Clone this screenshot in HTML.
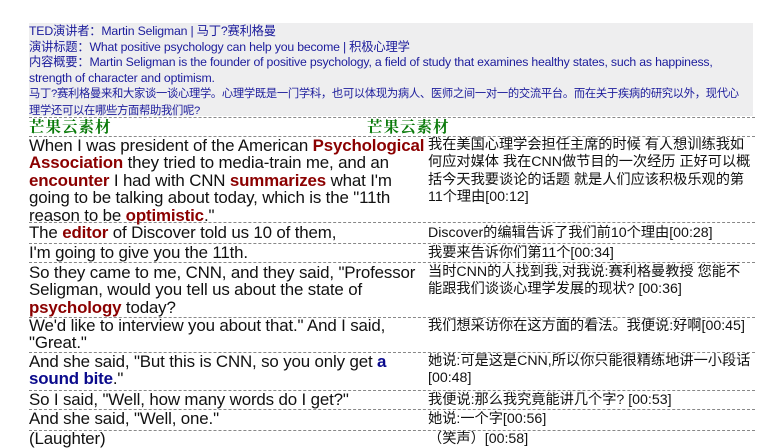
<!DOCTYPE html>
<html><head><meta charset="utf-8"><style>
*{margin:0;padding:0;box-sizing:border-box}
body{width:784px;height:441px;overflow:hidden;background:#fff;font-family:"Liberation Sans","Noto Sans CJK SC",sans-serif;position:relative}
.info{position:absolute;left:29px;top:23px;width:724px;height:93px;background:#eeeeef;color:#1c1c9c;font-size:12.3px;line-height:15.6px;padding:1px 0 0 0;letter-spacing:-0.2px;white-space:nowrap;overflow:hidden}
.info .cj{font-size:11.3px;letter-spacing:-0.3px}
.hdr{position:absolute;top:117px;color:#0a7a0a;font-size:15.5px;font-weight:bold;font-family:"Noto Serif CJK SC","Noto Sans CJK SC",serif;letter-spacing:1px;line-height:19px}
.line{position:absolute;left:29px;width:726px;border-top:1px dashed #888;height:0}
.l{position:absolute;left:29px;width:400px;font-size:16.9px;line-height:17.4px;color:#111;letter-spacing:-0.15px;white-space:nowrap}
.r{position:absolute;left:428px;width:330px;font-size:14.2px;line-height:17.4px;color:#111;white-space:nowrap}
b.k{color:#8b0000}
b.bl{color:#0a0a8c}
</style></head><body>
<div class="info">TED演讲者：Martin Seligman | 马丁?赛利格曼<br>演讲标题：What positive psychology can help you become | 积极心理学<br>内容概要：Martin Seligman is the founder of positive psychology, a field of study that examines healthy states, such as happiness,<br>strength of character and optimism.<br><span class="cj">马丁?赛利格曼来和大家谈一谈心理学。心理学既是一门学科，也可以体现为病人、医师之间一对一的交流平台。而在关于疾病的研究以外，现代心</span><br><span class="cj">理学还可以在哪些方面帮助我们呢?</span></div>
<div class="line" style="top:117px"></div>
<div class="hdr" style="left:29px">芒果云素材</div>
<div class="hdr" style="left:367px">芒果云素材</div>
<div class="line" style="top:136px"></div>

<div class="l" style="top:137px">When I was president of the American <b class="k">Psychological</b><br><b class="k">Association</b> they tried to media-train me, and an<br><b class="k">encounter</b> I had with CNN <b class="k">summarizes</b> what I'm<br>going to be talking about today, which is the "11th<br>reason to be <b class="k">optimistic</b>."</div>
<div class="r" style="top:137px">我在美国心理学会担任主席的时候 有人想训练我如<br>何应对媒体 我在CNN做节目的一次经历 正好可以概<br>括今天我要谈论的话题 就是人们应该积极乐观的第<br>11个理由[00:12]</div>
<div class="line" style="top:222px"></div>

<div class="l" style="top:224px">The <b class="k">editor</b> of Discover told us 10 of them,</div>
<div class="r" style="top:225px">Discover的编辑告诉了我们前10个理由[00:28]</div>
<div class="line" style="top:243px"></div>

<div class="l" style="top:244px">I'm going to give you the 11th.</div>
<div class="r" style="top:245px">我要来告诉你们第11个[00:34]</div>
<div class="line" style="top:262px"></div>

<div class="l" style="top:264px">So they came to me, CNN, and they said, "Professor<br>Seligman, would you tell us about the state of<br><b class="k">psychology</b> today?</div>
<div class="r" style="top:264px">当时CNN的人找到我,对我说:赛利格曼教授 您能不<br>能跟我们谈谈心理学发展的现状? [00:36]</div>
<div class="line" style="top:317px"></div>

<div class="l" style="top:317px">We'd like to interview you about that." And I said,<br>"Great."</div>
<div class="r" style="top:318px">我们想采访你在这方面的看法。我便说:好啊[00:45]</div>
<div class="line" style="top:352px"></div>

<div class="l" style="top:353px">And she said, "But this is CNN, so you only get <b class="bl">a</b><br><b class="bl">sound bite</b>."</div>
<div class="r" style="top:353px">她说:可是这是CNN,所以你只能很精练地讲一小段话<br>[00:48]</div>
<div class="line" style="top:390px"></div>

<div class="l" style="top:391px">So I said, "Well, how many words do I get?"</div>
<div class="r" style="top:392px">我便说:那么我究竟能讲几个字? [00:53]</div>
<div class="line" style="top:409px"></div>

<div class="l" style="top:410px">And she said, "Well, one."</div>
<div class="r" style="top:411px">她说:一个字[00:56]</div>
<div class="line" style="top:430px"></div>

<div class="l" style="top:430px">(Laughter)</div>
<div class="r" style="top:431px">（笑声）[00:58]</div>
</body></html>
